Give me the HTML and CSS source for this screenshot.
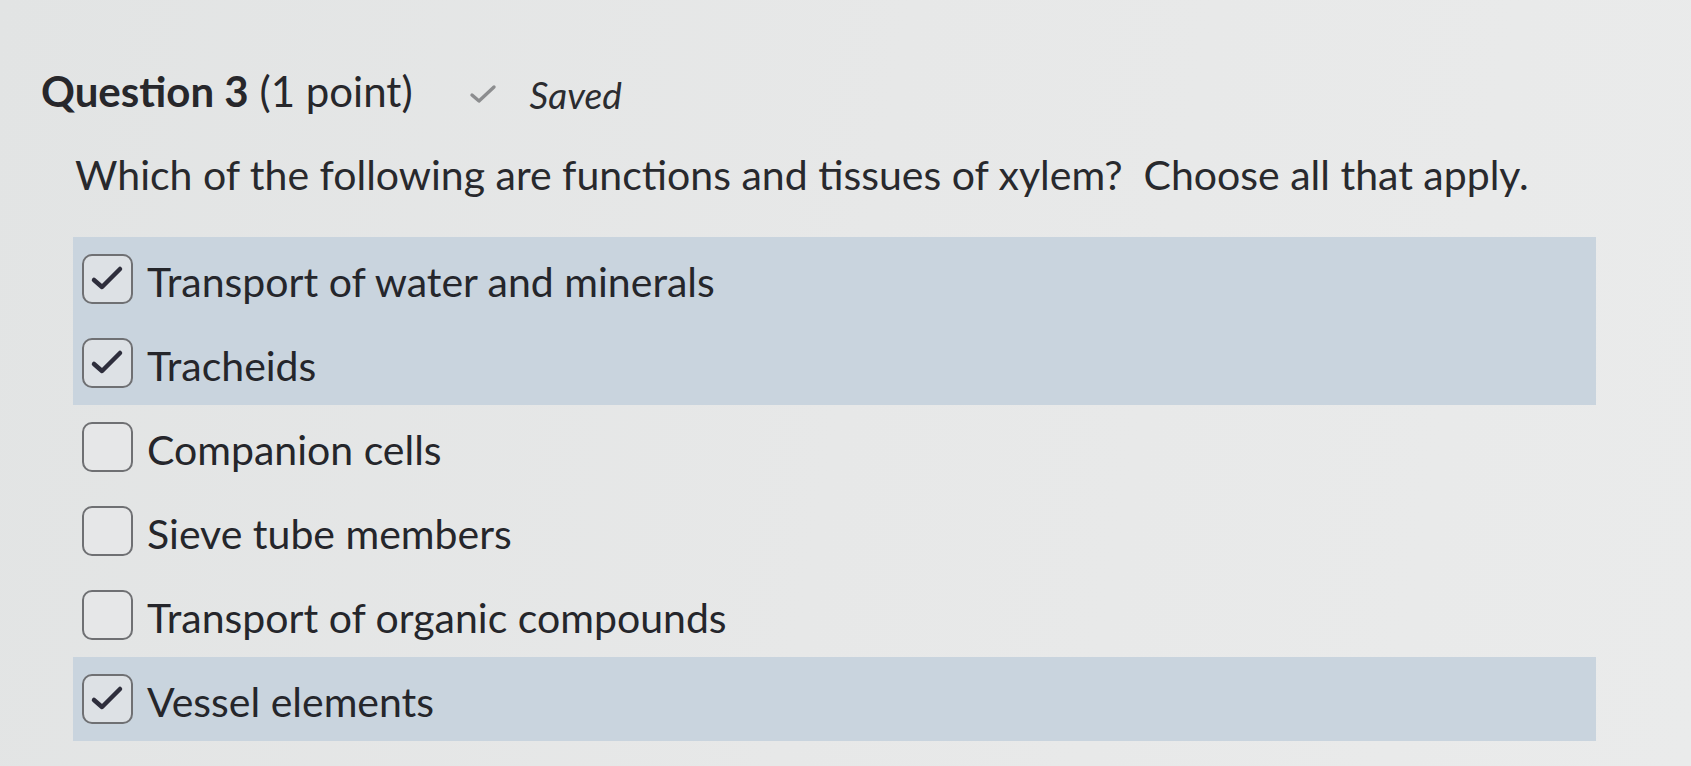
FILE: index.html
```html
<!DOCTYPE html>
<html lang="en">
<head>
<meta charset="utf-8">
<title>Question 3</title>
<link rel="stylesheet" href="styles.css">
</head>
<body>
<div class="page">
  <div class="header">
    <h2 class="title"><span class="qnum">Question 3</span> <span class="pts">(1 point)</span></h2>
    <span class="saved">
      <svg class="saved-check" viewBox="0 0 28 20" width="28" height="20"><path d="M3 11 L10 17 L25 3" fill="none" stroke="#8c8d8f" stroke-width="3.4" stroke-linecap="round" stroke-linejoin="round"/></svg>
      <span class="saved-text">Saved</span>
    </span>
  </div>
  <p class="prompt">Which of the following are functions and tissues of xylem?&nbsp; Choose all that apply.</p>
  <div class="options">
    <div class="group selected">
      <div class="opt"><span class="box checked"><svg viewBox="0 0 47 46" width="47" height="46"><path d="M10 24 L18 31 L36 13" fill="none" stroke="#2e2e3c" stroke-width="4.5" stroke-linecap="round" stroke-linejoin="round"/></svg></span><span class="label">Transport of water and minerals</span></div>
      <div class="opt"><span class="box checked"><svg viewBox="0 0 47 46" width="47" height="46"><path d="M10 24 L18 31 L36 13" fill="none" stroke="#2e2e3c" stroke-width="4.5" stroke-linecap="round" stroke-linejoin="round"/></svg></span><span class="label">Tracheids</span></div>
    </div>
    <div class="group">
      <div class="opt"><span class="box"></span><span class="label">Companion cells</span></div>
      <div class="opt"><span class="box"></span><span class="label">Sieve tube members</span></div>
      <div class="opt"><span class="box"></span><span class="label">Transport of organic compounds</span></div>
    </div>
    <div class="group selected">
      <div class="opt"><span class="box checked"><svg viewBox="0 0 47 46" width="47" height="46"><path d="M10 24 L18 31 L36 13" fill="none" stroke="#2e2e3c" stroke-width="4.5" stroke-linecap="round" stroke-linejoin="round"/></svg></span><span class="label">Vessel elements</span></div>
    </div>
  </div>
</div>
</body>
</html>
```

FILE: styles.css
```css
html, body {
  margin: 0;
  padding: 0;
}
body {
  background: linear-gradient(100deg, #e2e4e4 0%, #e7e8e8 50%, #eaebeb 100%);
  font-family: Lato, "Open Sans", "Liberation Sans", sans-serif;
  color: #26272c;
  width: 1691px;
  height: 766px;
  overflow: hidden;
}
.page {
  padding: 61px 0 0 41px;
}
.header {
  display: flex;
  align-items: center;
  height: 60px;
}
.title {
  margin: 0;
  font-size: 42px;
  font-weight: 400;
  color: #27272b;
}
.qnum {
  font-weight: 700;
}
.saved {
  display: flex;
  align-items: center;
  margin-left: 56px;
  margin-top: 6px;
}
.saved-check {
  display: block;
}
.saved-text {
  font-style: italic;
  font-size: 37px;
  color: #2b2c30;
  margin-left: 33px;
}
.prompt {
  margin: 26px 0 0 34px;
  font-size: 41px;
  line-height: 56px;
  color: #28292d;
}
.options {
  margin: 34px 0 0 32px;
  width: 1523px;
}
.group.selected {
  background: #c9d4de;
}
.opt {
  display: flex;
  align-items: center;
  height: 84px;
  padding-left: 9px;
}
.box {
  box-sizing: border-box;
  width: 51px;
  height: 50px;
  border: 2.5px solid #6f7073;
  border-radius: 10px;
  background: #e6e7e8;
  flex: none;
  display: flex;
  align-items: center;
  justify-content: center;
}
.group.selected .box {
  background: #dde1e5;
}
.box svg {
  display: block;
}
.label {
  margin-left: 14px;
  padding-top: 4px;
  font-size: 41px;
  color: #25262b;
}
```
